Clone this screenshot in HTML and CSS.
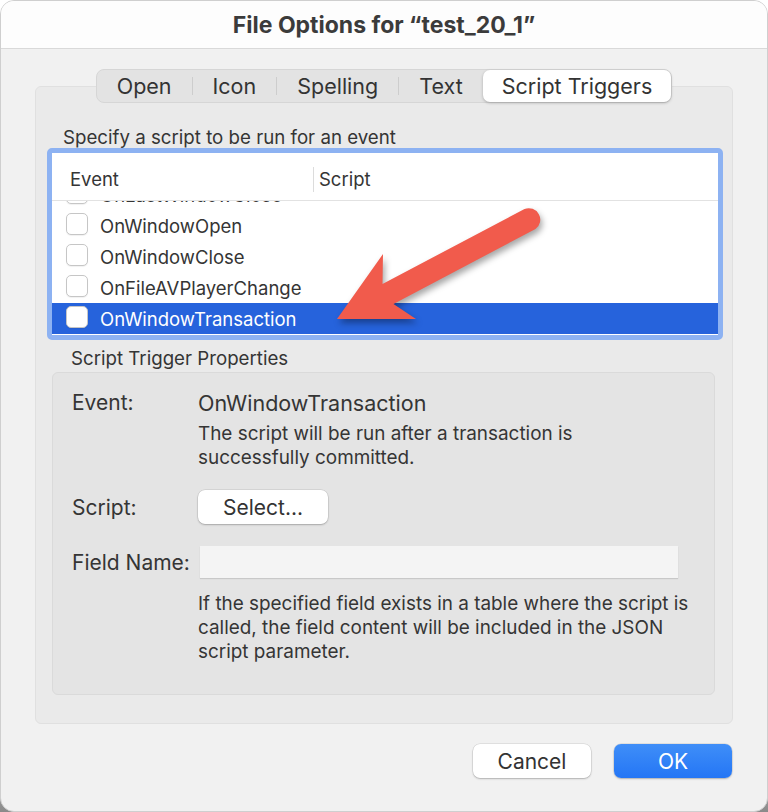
FILE: index.html
```html
<!DOCTYPE html>
<html lang="en">
<head>
    <meta charset="UTF-8">
    <meta name="viewport" content="width=device-width, initial-scale=1.0">
    <title>File Options</title>
    <link rel="stylesheet" href="styles.css">
</head>
<body>
    <div class="window">
        <div class="titlebar">File Options for “test_20_1”</div>

        <div class="tabview">
            <div class="tabs">
                <div class="segments">
                    <span class="tab">Open</span>
                    <span class="sep"></span>
                    <span class="tab">Icon</span>
                    <span class="sep"></span>
                    <span class="tab">Spelling</span>
                    <span class="sep"></span>
                    <span class="tab">Text</span>
                    <span class="tab active">Script Triggers</span>
                </div>
            </div>

            <div class="panel">
                <div class="caption">Specify a script to be run for an event</div>
                <div class="list">
                    <div class="list-head">
                        <span class="col-event">Event</span>
                        <span class="col-script">Script</span>
                    </div>
                    <div class="list-body">
                        <div class="rows">
                            <div class="row"><span class="check"></span>OnLastWindowClose</div>
                            <div class="row"><span class="check"></span>OnWindowOpen</div>
                            <div class="row"><span class="check"></span>OnWindowClose</div>
                            <div class="row"><span class="check"></span>OnFileAVPlayerChange</div>
                            <div class="row selected"><span class="check"></span>OnWindowTransaction</div>
                        </div>
                    </div>
                </div>

                <div class="group-label">Script Trigger Properties</div>
                <div class="group">
                    <div class="prop">
                        <span class="prop-label">Event:</span>
                        <span class="event-name">OnWindowTransaction</span>
                    </div>
                    <p class="hint">The script will be run after a transaction is<br>successfully committed.</p>

                    <div class="prop prop-script">
                        <span class="prop-label">Script:</span>
                        <button class="btn select">Select...</button>
                    </div>

                    <div class="prop prop-field">
                        <span class="prop-label">Field Name:</span>
                        <input class="field" type="text">
                    </div>
                    <p class="hint note">If the specified field exists in a table where the script is<br>called, the field content will be included in the JSON<br>script parameter.</p>
                </div>
            </div>
        </div>

        <div class="actions">
            <button class="btn">Cancel</button>
            <button class="btn primary">OK</button>
        </div>

        <!-- annotation arrow drawn over the list -->
        <svg class="arrow" width="768" height="812" viewBox="0 0 768 812">
            <path d="M337 319 L383 254 L382.5 284 L524.5 209 A11.5 11.5 0 0 1 535.5 229 L393.5 304 L416 319 Z" fill="#f15b4c"/>
        </svg>
    </div>
</body>
</html>
```

FILE: styles.css
```css
body{
    margin: 0;
    background: linear-gradient(#ffffff, #ffffff 85%, #8a8a8a);
    font-family: Inter, "Noto Sans", sans-serif;
    color: #353535;
}
.window{
    position: relative;
    height: 812px;
    box-sizing: border-box;
    border: 1px solid #cfcfcf;
    border-radius: 14px;
    background: #f1f1f1;
    overflow: hidden;
}
.titlebar{
    height: 47px;
    display: flex;
    align-items: center;
    justify-content: center;
    background: #fdfdfd;
    border-bottom: 1px solid #d9d9d9;
    font-size: 23px;
    font-weight: 700;
    color: #3b3b3b;
}

/* tabs + panel */
.tabview{
    margin: 20px 34px 0 34px;
}
.tabs{
    position: relative;
    z-index: 1;
    display: flex;
    justify-content: center;
    margin-bottom: -17px;
}
.segments{
    display: flex;
    align-items: center;
    height: 34px;
    box-sizing: border-box;
    background: #e3e3e3;
    border: 1px solid #d6d6d6;
    border-radius: 8px;
}
.tab{
    padding: 0 20px;
    font-size: 21.5px;
    line-height: 32px;
    color: #333;
}
.tab.active{
    background: #fff;
    border-radius: 7px;
    box-shadow: 0 1px 3px rgba(0,0,0,0.25);
    padding: 0 19px;
}
.sep{
    width: 1px;
    height: 18px;
    background: #cdcdcd;
}
.panel{
    background: #eaeaea;
    border: 1px solid #e0e0e0;
    border-radius: 6px;
    padding: 41px 9px 28px 11px;
}
.caption{
    font-size: 18.7px;
    line-height: 20px;
    padding-left: 16px;
}

/* event list */
.list{
    border: 5px solid #8db2f2;
    border-radius: 5px;
    background: #fff;
}
.list-head{
    height: 48px;
    box-sizing: border-box;
    padding-top: 5px;
    display: flex;
    align-items: center;
    border-bottom: 1px solid #e2e2e2;
    font-size: 18.5px;
}
.col-event{
    width: 243px;
    padding-left: 18px;
}
.col-script{
    border-left: 1px solid #dcdcdc;
    padding-left: 5px;
    line-height: 25px;
}
.list-body{
    height: 134px;
    overflow: hidden;
}
.rows{
    margin-top: -22px;
}
.row{
    height: 31px;
    display: flex;
    align-items: center;
    gap: 12px;
    padding-left: 14px;
    font-size: 18.5px;
    line-height: 22px;
}
.row.selected{
    background: #2663dc;
    color: #fff;
}
.check{
    width: 22px;
    height: 22px;
    box-sizing: border-box;
    margin-bottom: 4px;
    border: 1px solid #c6c6c6;
    border-radius: 5px;
    background: #fff;
    box-shadow: 0 1px 1px rgba(0,0,0,0.06);
}

/* properties */
.group-label{
    font-size: 18.7px;
    line-height: 20px;
    margin-top: 9px;
    padding-left: 24px;
}
.group{
    margin: 3px 8px 0 5px;
    background: #e4e4e4;
    border: 1px solid #dadada;
    border-radius: 6px;
    padding: 17px 20px 30px 19px;
}
.prop{
    display: flex;
    align-items: center;
}
.prop-label{
    width: 126px;
    flex-shrink: 0;
    font-size: 21px;
}
.event-name{
    font-size: 21.5px;
    line-height: 24px;
}
.hint{
    margin: 7px 0 0 126px;
    font-size: 18.9px;
    line-height: 24px;
}
.prop-script{
    margin-top: 20px;
}
.prop-field{
    margin-top: 22px;
}
.prop-field .prop-label{
    width: 128px;
}
.field{
    width: 478px;
    height: 32px;
    box-sizing: border-box;
    border: none;
    background: #f4f4f4;
    box-shadow: 0 1px 1px rgba(0,0,0,0.12);
}
.note{
    margin-top: 14px;
}

/* buttons */
.btn{
    width: 118px;
    height: 34px;
    border: none;
    border-radius: 7px;
    background: #fff;
    box-shadow: 0 1px 2px rgba(0,0,0,0.22), 0 0 0 0.5px rgba(0,0,0,0.12);
    font-family: Inter, "Noto Sans", sans-serif;
    font-size: 21px;
    color: #333;
}
.select{
    width: 130px;
}
.actions{
    display: flex;
    justify-content: flex-end;
    gap: 23px;
    padding: 20px 35px 0 0;
}
.btn.primary{
    background: linear-gradient(#3f8ef8, #2476f5);
    color: #fff;
}

.arrow{
    position: absolute;
    left: -1px;
    top: -1px;
    pointer-events: none;
    filter: drop-shadow(2px 4px 3px rgba(0,0,0,0.35));
}
```
